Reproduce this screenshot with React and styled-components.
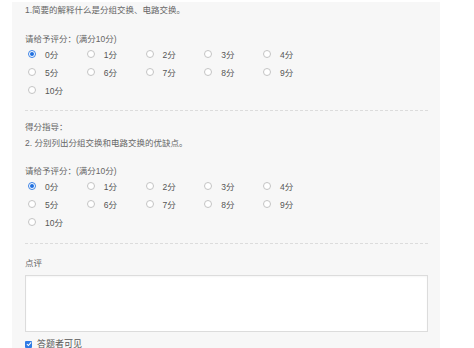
import React from "react";
import styled, { createGlobalStyle } from "styled-components";

const GlobalStyle = createGlobalStyle`
  html, body {
    margin: 0;
    padding: 0;
    background: #fff;
  }
  body {
    font-family: "Liberation Sans", "Noto Sans CJK SC", sans-serif;
  }
`;

const scores = [0, 1, 2, 3, 4, 5, 6, 7, 8, 9, 10];

export default function App() {
  return (
    <>
      <GlobalStyle />
      <Panel>
        <Line>1.简要的解释什么是分组交换、电路交换。</Line>
        <ScoreBlock selected={0} top={17} />
        <Divider />

        <Line className="guide">得分指导：</Line>
        <Line className="q2">2. 分别列出分组交换和电路交换的优缺点。</Line>
        <ScoreBlock selected={0} top={16} />
        <Divider className="second" />

        <Label>点评</Label>
        <Comment />
        <CheckRow>
          <CheckBox>
            <svg width="6" height="6" viewBox="0 0 10 10">
              <path d="M1.5 5.2 L4 7.6 L8.6 2.4" fill="none" stroke="#fff" strokeWidth="1.8" />
            </svg>
          </CheckBox>
          <span>答题者可见</span>
        </CheckRow>
      </Panel>
    </>
  );
}

function ScoreBlock({ selected, top }) {
  return (
    <>
      <ScoreTitle $top={top}>请给予评分：(满分10分)</ScoreTitle>
      <RadioGrid>
        {scores.map((s) => (
          <RadioItem key={s}>
            <Radio $checked={s === selected} />
            <span>{s}分</span>
          </RadioItem>
        ))}
      </RadioGrid>
    </>
  );
}

const Panel = styled.div`
  margin: 2px 0 0 12px;
  width: 428px;
  height: 360px;
  box-sizing: border-box;
  padding: 1px 12px 0 13px;
  background: #f7f7f7;
  color: #666;
  font-size: 8.5px;
  overflow: hidden;

  .guide {
    margin-top: 9px;
  }
  .q2 {
    margin-top: 2px;
  }
`;

const Line = styled.div`
  line-height: 14px;
  height: 14px;
  white-space: nowrap;
`;

const ScoreTitle = styled.div`
  margin-top: ${(p) => p.$top}px;
  line-height: 11px;
  height: 11px;
  white-space: nowrap;
`;

const RadioGrid = styled.div`
  display: grid;
  grid-template-columns: repeat(5, 58.75px);
  grid-auto-rows: 18px;
`;

const RadioItem = styled.label`
  display: flex;
  align-items: center;
  gap: 9px;
  padding-left: 3px;
  color: #555;
  white-space: nowrap;
`;

const Radio = styled.span`
  width: 8px;
  height: 8px;
  box-sizing: border-box;
  border-radius: 50%;
  border: 1px solid ${(p) => (p.$checked ? "#3b82e6" : "#c4c4c4")};
  background: #fff;
  position: relative;
  flex: none;

  &::after {
    content: "";
    display: ${(p) => (p.$checked ? "block" : "none")};
    position: absolute;
    left: 1px;
    top: 1px;
    width: 4px;
    height: 4px;
    border-radius: 50%;
    background: #1f6fe0;
  }
`;

const Divider = styled.div`
  margin-top: 11px;
  height: 0;
  border-top: 1px dashed #dcdcdc;

  &.second {
    margin-top: 12px;
  }
`;

const Label = styled.div`
  margin-top: 12px;
  line-height: 14px;
  height: 14px;
`;

const Comment = styled.div`
  margin-top: 5px;
  height: 57px;
  box-sizing: border-box;
  background: #fff;
  border: 1px solid #dcdcdc;
  box-shadow: inset 0 1px 2px rgba(0, 0, 0, 0.04);
`;

const CheckRow = styled.div`
  margin-top: 5px;
  display: flex;
  align-items: center;
  gap: 5px;
  line-height: 14px;
  font-size: 9px;
  color: #555;
`;

const CheckBox = styled.span`
  width: 7px;
  height: 7px;
  border-radius: 1px;
  background: #2f7be5;
  display: flex;
  align-items: center;
  justify-content: center;
  flex: none;
`;
